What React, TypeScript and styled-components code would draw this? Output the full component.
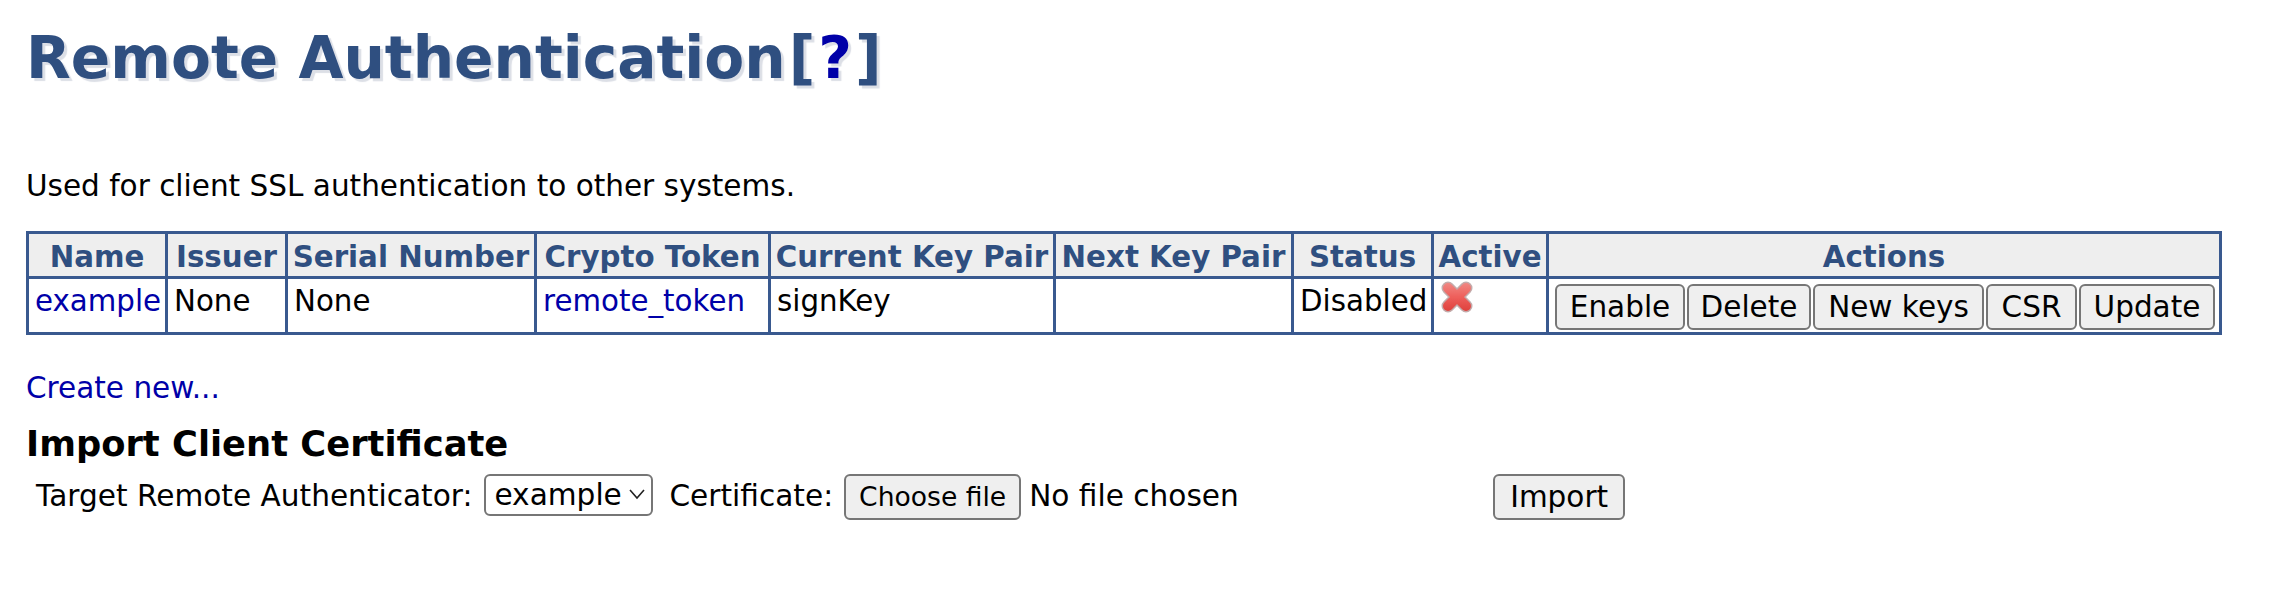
import React from 'react';
import styled, { createGlobalStyle } from 'styled-components';

const GlobalStyle = createGlobalStyle`
  html, body {
    margin: 0;
    padding: 0;
    background: #fff;
    color: #000;
    font-family: "DejaVu Sans", Verdana, sans-serif;
    font-size: 29.5px;
  }
`;

const Page = styled.div`
  width: 2292px;
  height: 598px;
  padding: 22px 0 0 26px;
  box-sizing: border-box;
  overflow: hidden;
`;

const Title = styled.h1`
  margin: 0;
  height: 72px;
  font-size: 58.2px;
  line-height: 72px;
  font-weight: bold;
  color: #2f4f80;
  text-shadow: 3px 3px 1px #dcdfe6;
  white-space: nowrap;

  a {
    color: #0000a8;
    text-decoration: none;
  }
`;

const Bracket = styled.span`
  padding: 0 3px;
`;

const Intro = styled.p`
  margin: 74px 0 0;
  height: 36px;
  font-size: 29.5px;
  line-height: 36px;
`;

const Table = styled.table`
  margin-top: 27px;
  width: 2193px;
  table-layout: fixed;
  border-collapse: collapse;
  border: 3px solid #39598f;
`;

const HeadCell = styled.th`
  height: 43px;
  padding: 4px 0 0;
  box-sizing: border-box;
  border: 3px solid #39598f;
  background: #eee;
  color: #2f4f80;
  font-size: 29.3px;
  line-height: 38px;
  font-weight: bold;
  text-align: center;
  white-space: nowrap;
  overflow: hidden;
`;

const Cell = styled.td`
  height: 56px;
  padding: 3px 0 0 6px;
  box-sizing: border-box;
  border: 3px solid #39598f;
  vertical-align: top;
  line-height: 38px;
  white-space: nowrap;
  font-size: 29.3px;
`;

const ActionCell = styled(Cell)`
  padding: 5px 0 0 6px;
`;

const TextLink = styled.a`
  color: #0000a8;
  text-decoration: none;
`;

const Actions = styled.div`
  display: flex;
  gap: 2px;
`;

const Button = styled.button<{ $width: number }>`
  display: block;
  flex: none;
  width: ${(p) => p.$width}px;
  height: 46px;
  padding: 0;
  box-sizing: border-box;
  border: 2px solid #767676;
  border-radius: 6px;
  background: #efefef;
  color: #000;
  font-family: inherit;
  font-size: 29.5px;
  line-height: 42px;
`;

const ChooseButton = styled(Button)`
  font-size: 26.6px;
`;

const CreateLink = styled.div`
  margin-top: 33px;
  height: 40px;
  line-height: 40px;
  font-size: 29.5px;
`;

const SubTitle = styled.h2`
  margin: 16px 0 0;
  height: 40px;
  line-height: 40px;
  font-size: 35.3px;
  font-weight: bold;
`;

const ImportRow = styled.form`
  display: flex;
  align-items: flex-start;
  margin: 10px 0 0 10px;
  height: 46px;
  font-size: 29.6px;
  line-height: 44px;
  white-space: nowrap;
`;

const TargetLabel = styled.span`
  margin-right: 12px;
`;

const CertLabel = styled.span`
  margin-right: 11px;
`;

const SelectBox = styled.div`
  position: relative;
  flex: none;
  width: 169px;
  height: 42px;
  margin-right: 16px;
  box-sizing: border-box;
  border: 2px solid #767676;
  border-radius: 6px;
  background: #fff;
  padding-left: 8px;
  line-height: 38px;

  svg {
    position: absolute;
    top: 12px;
    right: 5px;
  }
`;

const FileName = styled.span`
  flex: none;
  margin-left: 8px;
  width: 464px;
`;

const CrossSvg = styled.svg`
  display: block;
  margin: -3px 0 0 -1px;
`;

const columns = [139, 120, 249, 234, 285, 238, 140, 115, 673];
const headers = [
  'Name',
  'Issuer',
  'Serial Number',
  'Crypto Token',
  'Current Key Pair',
  'Next Key Pair',
  'Status',
  'Active',
  'Actions',
];
const actions = [
  { label: 'Enable', width: 130 },
  { label: 'Delete', width: 124 },
  { label: 'New keys', width: 171 },
  { label: 'CSR', width: 91 },
  { label: 'Update', width: 136 },
];

const CrossIcon = () => (
  <CrossSvg width="36" height="36" viewBox="0 0 36 36">
    <defs>
      <linearGradient id="cross" gradientUnits="userSpaceOnUse" x1="0" y1="3" x2="0" y2="33">
        <stop offset="0" stopColor="#f08a86" />
        <stop offset="0.5" stopColor="#ee5f5b" />
        <stop offset="1" stopColor="#dd3f3b" />
      </linearGradient>
      <filter id="soft" filterUnits="userSpaceOnUse" x="0" y="0" width="36" height="36">
        <feGaussianBlur stdDeviation="0.7" />
      </filter>
    </defs>
    <g filter="url(#soft)" fill="none" strokeLinecap="round">
      <path d="M9 9 L27 27 M27 9 L9 27" stroke="#a88" strokeOpacity="0.7" strokeWidth="13" />
      <path d="M9 9 L27 27 M27 9 L9 27" stroke="url(#cross)" strokeWidth="10" />
    </g>
  </CrossSvg>
);

const App: React.FC = () => (
  <Page>
    <GlobalStyle />
    <Title>
      Remote Authentication
      <Bracket>[</Bracket>
      <a href="#help">?</a>
      <Bracket>]</Bracket>
    </Title>
    <Intro>Used for client SSL authentication to other systems.</Intro>
    <Table>
      <colgroup>
        {columns.map((w, i) => (
          <col key={i} style={{ width: w }} />
        ))}
      </colgroup>
      <thead>
        <tr>
          {headers.map((h) => (
            <HeadCell key={h}>{h}</HeadCell>
          ))}
        </tr>
      </thead>
      <tbody>
        <tr>
          <Cell>
            <TextLink href="#example">example</TextLink>
          </Cell>
          <Cell>None</Cell>
          <Cell>None</Cell>
          <Cell>
            <TextLink href="#token">remote_token</TextLink>
          </Cell>
          <Cell>signKey</Cell>
          <Cell />
          <Cell>Disabled</Cell>
          <Cell>
            <CrossIcon />
          </Cell>
          <ActionCell>
            <Actions>
              {actions.map((a) => (
                <Button key={a.label} type="button" $width={a.width}>
                  {a.label}
                </Button>
              ))}
            </Actions>
          </ActionCell>
        </tr>
      </tbody>
    </Table>
    <CreateLink>
      <TextLink href="#new">Create new...</TextLink>
    </CreateLink>
    <SubTitle>Import Client Certificate</SubTitle>
    <ImportRow>
      <TargetLabel>Target Remote Authenticator:</TargetLabel>
      <SelectBox>
        example
        <svg width="18" height="12" viewBox="0 0 18 12">
          <path d="M2 2 L9 10 L16 2" stroke="#222" strokeWidth="1.6" fill="none" />
        </svg>
      </SelectBox>
      <CertLabel>Certificate:</CertLabel>
      <ChooseButton type="button" $width={177}>
        Choose file
      </ChooseButton>
      <FileName>No file chosen</FileName>
      <Button type="button" $width={132}>
        Import
      </Button>
    </ImportRow>
  </Page>
);

export default App;
